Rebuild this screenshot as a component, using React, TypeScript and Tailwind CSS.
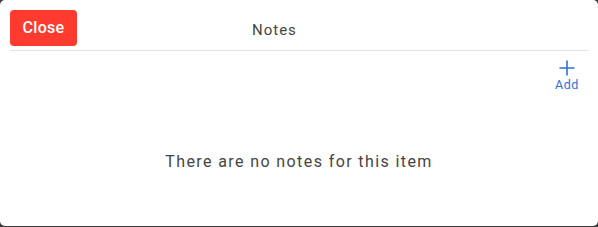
import React from "react";

export default function App() {
  return (
    <div className="w-[598px] h-[227px] bg-[#3a3a3a]" style={{ fontFamily: 'Roboto, "Noto Sans", sans-serif' }}>
      <div className="w-full h-[226px] bg-white rounded-[5px] flex flex-col px-[10px] pt-[10px]">
        <div className="flex items-center h-[36px]">
          <button className="w-[67px] h-[36px] rounded-[4px] bg-[#ff3b30] text-white text-[16px] font-medium tracking-[0.3px] flex items-center justify-center">
            Close
          </button>
          <div className="ml-[175px] text-[15px] text-[#444] tracking-[1px] mt-[5px]">Notes</div>
        </div>
        <div className="mt-[4px] h-px bg-[#e3e3e3]" />
        <div className="flex justify-end pr-[9px] pt-[8px]">
          <div className="flex flex-col items-center text-[#2f6fd6]">
            <svg width="18" height="18" viewBox="0 0 18 18" fill="none" stroke="currentColor" strokeWidth="1.6">
              <path d="M9 1.5v15M1.5 9h15" />
            </svg>
            <span className="text-[12.5px] leading-[14px] mt-[1px] tracking-[0.6px]">Add</span>
          </div>
        </div>
        <div className="flex justify-center mt-[58px] text-[16px] text-[#444] tracking-[1.4px]">
          There are no notes for this item
        </div>
      </div>
    </div>
  );
}
